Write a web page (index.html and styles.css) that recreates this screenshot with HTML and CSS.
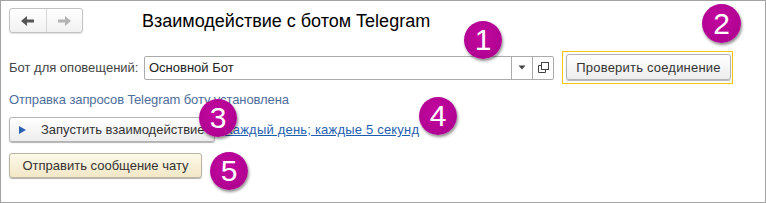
FILE: index.html
```html
<!DOCTYPE html>
<html lang="ru">
<head>
<meta charset="utf-8">
<title>Взаимодействие с ботом Telegram</title>
<link rel="stylesheet" href="styles.css">
</head>
<body>
<div class="frame">
  <div class="header">
    <div class="nav">
      <span class="nav-btn">
        <svg width="14" height="10" viewBox="0 0 14 10"><path d="M0 5 L6 0 L6 3.5 L13 3.5 L13 6.5 L6 6.5 L6 10 Z" fill="#555"/></svg>
      </span>
      <span class="nav-btn">
        <svg width="14" height="10" viewBox="0 0 14 10"><path d="M14 5 L8 0 L8 3.5 L1 3.5 L1 6.5 L8 6.5 L8 10 Z" fill="#b4b4b4"/></svg>
      </span>
    </div>
    <h1 class="title">Взаимодействие с ботом Telegram</h1>
  </div>

  <div class="row-bot">
    <span class="label">Бот для оповещений:</span>
    <div class="field">
      <span class="field-text">Основной Бот</span>
      <span class="field-btn">
        <svg width="8" height="5" viewBox="0 0 8 5"><path d="M0.5 0.5 L7.5 0.5 L4 4.5 Z" fill="#444"/></svg>
      </span>
      <span class="field-btn">
        <svg width="11" height="11" viewBox="0 0 11 11" fill="none" stroke="#444" stroke-width="1"><rect x="3.5" y="0.5" width="7" height="7"/><path d="M3.5 3.5 H0.5 V10.5 H7.5 V7.5"/></svg>
      </span>
    </div>
    <div class="focus-box">
      <button class="btn btn-check">Проверить соединение</button>
    </div>
  </div>

  <div class="status">Отправка запросов Telegram боту установлена</div>

  <div class="row-run">
    <button class="btn btn-run">
      <svg width="7" height="8" viewBox="0 0 7 8"><path d="M0 0 L7 4 L0 8 Z" fill="#2b62b0"/></svg>
      <span>Запустить взаимодействие</span>
    </button>
    <a class="schedule" href="#">Каждый день; каждые 5 секунд</a>
  </div>

  <div class="row-send">
    <button class="btn btn-send">Отправить сообщение чату</button>
  </div>

  <span class="badge b1">1</span>
  <span class="badge b2">2</span>
  <span class="badge b3">3</span>
  <span class="badge b4">4</span>
  <span class="badge b5">5</span>
</div>
</body>
</html>
```

FILE: styles.css
```css
* { box-sizing: border-box; }

html, body {
  margin: 0;
  padding: 0;
  background: #fff;
}

body {
  font-family: "Liberation Sans", Arial, sans-serif;
  font-size: 13px;
  color: #333;
}

.frame {
  position: relative;
  width: 766px;
  height: 203px;
  border: 1px solid #a3a3a3;
  padding: 7px 8px 0 8px;
  overflow: hidden;
}

.header {
  display: flex;
  align-items: center;
  height: 25px;
}

.nav {
  display: flex;
  width: 74px;
  height: 25px;
  border: 1px solid #c2c2c2;
  border-radius: 3px;
  background: linear-gradient(#ffffff, #f1f1f1);
  box-shadow: 0 1px 1px rgba(0, 0, 0, 0.12);
}

.nav-btn {
  flex: 1;
  display: flex;
  align-items: center;
  justify-content: center;
}

.nav-btn + .nav-btn {
  border-left: 1px solid #d6d6d6;
}

.title {
  margin: 0 0 0 59px;
  font-size: 18px;
  font-weight: normal;
  color: #000;
  position: relative;
  top: 1px;
}

.row-bot {
  display: flex;
  align-items: center;
  height: 33px;
  margin-top: 18px;
}

.label {
  width: 135px;
  color: #444;
}

.field {
  display: flex;
  width: 410px;
  height: 24px;
  border: 1px solid #ababab;
  border-radius: 2px;
  background: #fff;
}

.field-text {
  flex: 1;
  display: flex;
  align-items: center;
  padding-left: 4px;
  color: #222;
}

.field-btn {
  width: 21px;
  display: flex;
  align-items: center;
  justify-content: center;
  border-left: 1px solid #ababab;
}

.focus-box {
  margin-left: 8px;
  width: 171px;
  height: 33px;
  border: 1px solid #f2c811;
  padding: 2px 1px 2px 3px;
  display: flex;
}

.btn {
  font-family: "Liberation Sans", Arial, sans-serif;
  font-size: 13px;
  color: #333;
  border: 1px solid #b3b3b3;
  border-radius: 3px;
  background: linear-gradient(#ffffff, #ededed);
  box-shadow: 0 1px 1px rgba(0, 0, 0, 0.3);
  padding: 0;
  display: flex;
  align-items: center;
  justify-content: center;
}

.btn-check {
  width: 165px;
  height: 26px;
  letter-spacing: 0.2px;
}

.status {
  margin-top: 8px;
  height: 16px;
  line-height: 16px;
  color: #4e6e9c;
  letter-spacing: -0.1px;
}

.row-run {
  display: flex;
  align-items: center;
  margin-top: 9px;
  height: 25px;
}

.btn-run {
  width: 206px;
  height: 25px;
  justify-content: flex-start;
  padding-left: 9px;
  gap: 15px;
}

.schedule {
  margin-left: 10px;
  color: #1f5fb0;
  text-decoration: underline;
  letter-spacing: 0.2px;
}

.row-send {
  margin-top: 11px;
}

.btn-send {
  width: 193px;
  height: 25px;
  background: linear-gradient(#fdf9ea, #f2e7c6);
  border-color: #b9b3a0;
}

.badge {
  position: absolute;
  width: 38px;
  height: 38px;
  border-radius: 50%;
  background: radial-gradient(circle at 45% 40%, #c3089f, #a8008c);
  color: #fff;
  font-family: "Liberation Sans", Arial, sans-serif;
  font-size: 30px;
  line-height: 38px;
  text-align: center;
  box-shadow: 1px 2px 3px rgba(0, 0, 0, 0.45);
}

.b1 { left: 463px; top: 20px; }
.b2 { left: 701px; top: 3px; width: 39px; height: 39px; line-height: 39px; }
.b3 { left: 198px; top: 98px; }
.b4 { left: 418px; top: 96px; }
.b5 { left: 209px; top: 151px; }
```
